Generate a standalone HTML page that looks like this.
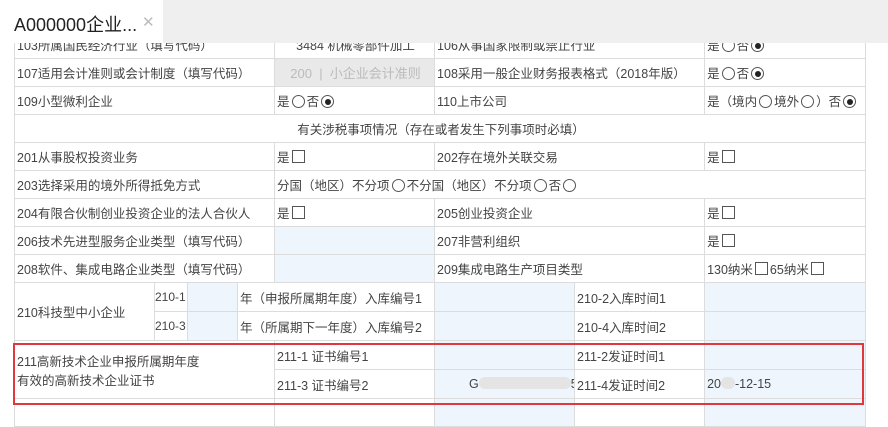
<!DOCTYPE html>
<html><head><meta charset="utf-8"><style>
body{margin:0;width:888px;height:407px;overflow:hidden;background:#fff;font-family:"Liberation Sans","Noto Sans CJK SC",sans-serif;color:#444;position:relative}
table{position:absolute;left:14px;top:30px;border-collapse:collapse;table-layout:fixed;width:851px;font-size:12.5px}
td{border:1px solid #dcdcdc;height:27px;padding:0 0 0 2px;white-space:nowrap;overflow:hidden;vertical-align:middle}
.b{background:#eef5fd}
.g{background:#e9e9e9;color:#bbb;text-align:center;font-size:13px}
.c{text-align:center}
.s{padding:0;font-size:12px}
.r{display:inline-block;width:11px;height:11px;border:1px solid #555;border-radius:50%;vertical-align:-2px;position:relative;margin:0 2px}
.r.on::after{content:"";position:absolute;left:2.5px;top:2.5px;width:6px;height:6px;border-radius:50%;background:#222}
.k{display:inline-block;width:11px;height:11px;border:1px solid #555;vertical-align:-1px;margin:0 2px}
.hdr{position:absolute;left:0;top:0;width:888px;height:43px;background:#efefef;z-index:2}
.tab{position:absolute;left:0;top:0;width:163px;height:43px;background:#fff;font-size:18px;color:#222}
.tab span{position:absolute;left:14px;top:11px}
.tab i{position:absolute;left:142px;top:13px;font-style:normal;color:#bbb;font-size:15px}
.red{position:absolute;left:13px;top:343px;width:847px;height:58px;border:2px solid #e0383c;z-index:3}
.blur{display:inline-block;width:92px;height:12px;background:#e4e4e4;border-radius:6px;vertical-align:-1px}
</style></head><body>
<div class="hdr"><div class="tab"><span>A000000企业...</span><i>✕</i></div></div>
<table>
<colgroup><col style="width:140px"><col style="width:33px"><col style="width:50px"><col style="width:37px"><col style="width:160px"><col style="width:140px"><col style="width:130px"><col style="width:161px"></colgroup>
<tr><td colspan="4">103所属国民经济行业（填写代码）</td><td class="c">3484 机械零部件加工</td><td colspan="2">106从事国家限制或禁止行业</td><td>是<span class="r"></span>否<span class="r on"></span></td></tr>
<tr><td colspan="4">107适用会计准则或会计制度（填写代码）</td><td class="g">200 &nbsp;|&nbsp; 小企业会计准则</td><td colspan="2">108采用一般企业财务报表格式（2018年版）</td><td>是<span class="r"></span>否<span class="r on"></span></td></tr>
<tr><td colspan="4">109小型微利企业</td><td>是<span class="r"></span>否<span class="r on"></span></td><td colspan="2">110上市公司</td><td>是（境内<span class="r"></span>境外<span class="r"></span>）否<span class="r on"></span></td></tr>
<tr><td colspan="8" class="c">有关涉税事项情况（存在或者发生下列事项时必填）</td></tr>
<tr><td colspan="4">201从事股权投资业务</td><td>是<span class="k"></span></td><td colspan="2">202存在境外关联交易</td><td>是<span class="k"></span></td></tr>
<tr><td colspan="4">203选择采用的境外所得抵免方式</td><td colspan="4">分国（地区）不分项<span class="r"></span>不分国（地区）不分项<span class="r"></span>否<span class="r"></span></td></tr>
<tr><td colspan="4">204有限合伙制创业投资企业的法人合伙人</td><td>是<span class="k"></span></td><td colspan="2">205创业投资企业</td><td>是<span class="k"></span></td></tr>
<tr><td colspan="4">206技术先进型服务企业类型（填写代码）</td><td class="b"></td><td colspan="2">207非营利组织</td><td>是<span class="k"></span></td></tr>
<tr><td colspan="4">208软件、集成电路企业类型（填写代码）</td><td class="b"></td><td colspan="2">209集成电路生产项目类型</td><td>130纳米<span class="k"></span>65纳米<span class="k"></span></td></tr>
<tr style="height:29px"><td rowspan="2">210科技型中小企业</td><td class="s">210-1</td><td class="b"></td><td colspan="2">年（申报所属期年度）入库编号1</td><td class="b"></td><td>210-2入库时间1</td><td class="b"></td></tr>
<tr style="height:29px"><td class="s">210-3</td><td class="b"></td><td colspan="2">年（所属期下一年度）入库编号2</td><td class="b"></td><td>210-4入库时间2</td><td class="b"></td></tr>
<tr style="height:29px"><td colspan="4" rowspan="2" style="white-space:normal;line-height:19px;padding-top:4px">211高新技术企业申报所属期年度<br>有效的高新技术企业证书</td><td>211-1 证书编号1</td><td class="b"></td><td>211-2发证时间1</td><td class="b"></td></tr>
<tr style="height:29px"><td>211-3 证书编号2</td><td class="b" style="padding-left:34px">G<span class="blur"></span>5</td><td>211-4发证时间2</td><td class="b">20<span class="blur" style="width:14px"></span>-12-15</td></tr>
<tr><td colspan="4"></td><td></td><td class="b"></td><td></td><td class="b"></td></tr>
</table>
<div class="red"></div>
</body></html>
